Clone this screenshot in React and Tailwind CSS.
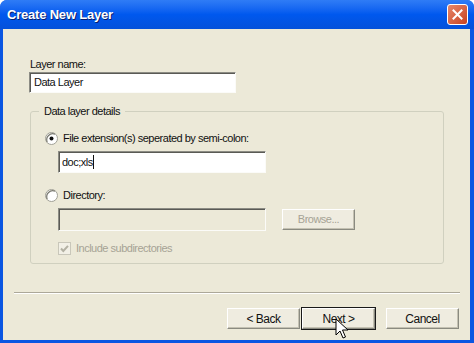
import React from "react";

const FONT = { fontFamily: '"Liberation Sans", Arial, sans-serif' };

const Radio = ({ checked }) => (
	<svg width="13" height="13" viewBox="0 0 13 13" className="shrink-0">
		<circle cx="6.5" cy="6.5" r="6" fill="#ffffff" stroke="#a0a096" strokeWidth="1" />
		<path d="M2.2 10 A6 6 0 0 1 10 2.2" fill="none" stroke="#7a7a70" strokeWidth="1.2" />
		{checked && <circle cx="6.5" cy="6.5" r="2" fill="#111" />}
	</svg>
);

const Sunken = ({ className, children, disabled }) => (
	<div
		className={
			"border border-t-[#8c8c84] border-l-[#8c8c84] border-b-[#fbfbf8] border-r-[#fbfbf8] shadow-[inset_1px_1px_0_#5a5a55] " +
			(disabled ? "bg-[#ece9d8] " : "bg-white ") +
			className
		}
	>
		{children}
	</div>
);

const Button = ({ label, isDefault, disabled }) => (
	<div
		className={
			"w-[75px] h-[23px] flex items-center justify-center " +
			(isDefault ? "border border-[#1a1a1a] " : "border border-transparent ")
		}
	>
		<div
			className={
				"w-full h-full flex items-center justify-center bg-[#efece0] border border-t-white border-l-white border-b-[#8a8a80] border-r-[#8a8a80] shadow-[inset_-1px_-1px_0_#c4c1b2] " +
				(disabled ? "text-[#a6a395]" : "text-[#111]")
			}
		>
			{label}
		</div>
	</div>
);

export default function App() {
	return (
		<div style={FONT} className="w-[474px] h-[343px] bg-[#0a56e2] rounded-t-[7px] flex flex-col overflow-hidden">
			{/* title bar */}
			<div className="h-[29px] shrink-0 flex items-center justify-between pl-[7px] pr-[6px] bg-gradient-to-b from-[#2f7cf6] via-[#0058ee] to-[#0451da]">
				<span className="text-white font-bold text-[13px] tracking-[-0.2px] [text-shadow:1px_1px_0_#0a1f6b]">Create New Layer</span>
				<div className="w-[21px] h-[21px] rounded-[3px] border border-white bg-gradient-to-br from-[#e6876a] to-[#c8401c] flex items-center justify-center">
					<svg width="11" height="11" viewBox="0 0 11 11">
						<path d="M1.5 1.5 L9.5 9.5 M9.5 1.5 L1.5 9.5" stroke="#fff" strokeWidth="2" strokeLinecap="square" />
					</svg>
				</div>
			</div>

			{/* body */}
			<div className="flex-1 mr-[4px] mb-[3px] ml-[3px] bg-[#ece9d8] flex flex-col text-[11px] tracking-[-0.5px] text-[#111] relative">
				<div className="pl-[27px] pt-[28px] leading-[14px]">Layer name:</div>
				<Sunken className="ml-[26px] mt-[1px] w-[207px] h-[21px] flex items-center pl-[4px]">Data Layer</Sunken>

				<fieldset className="ml-[27px] mt-[11px] w-[414px] h-[160px] border border-[#d0d0bf] rounded-[3px] px-[14px]">
					<legend className="px-[5px] ml-[-6px] leading-[14px]">Data layer details</legend>
					<div className="flex items-center gap-[5px] mt-[14px] h-[13px]">
						<Radio checked />
						<span>File extension(s) seperated by semi-colon:</span>
					</div>
					<Sunken className="ml-[13px] mt-[6px] w-[208px] h-[22px] flex items-center pl-[3px]">
						<span>doc;xls</span>
						<span className="w-px h-[14px] bg-[#111]" />
					</Sunken>
					<div className="flex items-center gap-[5px] mt-[16px] h-[13px]">
						<Radio />
						<span>Directory:</span>
					</div>
					<div className="flex items-center mt-[6px] ml-[13px] gap-[15px]">
						<Sunken disabled className="w-[208px] h-[23px]" />
						<Button label="Browse..." disabled />
					</div>
					<div className="flex items-center gap-[5px] ml-[13px] mt-[11px] h-[13px] text-[#a6a395]">
						<svg width="13" height="13" viewBox="0 0 13 13" className="shrink-0">
							<rect x="0.5" y="0.5" width="12" height="12" fill="#f2f0e6" stroke="#c9c7ba" />
							<path d="M3 6.5 L5.3 9 L10 3.8" fill="none" stroke="#b3b1a3" strokeWidth="2" />
						</svg>
						<span>Include subdirectories</span>
					</div>
				</fieldset>

				<div className="ml-[11px] mt-[28px] w-[446px] h-[2px] border-t border-t-[#aca899] border-b border-b-white" />

				<div className="flex mt-[13px] pl-[223px] text-[12px] tracking-[-0.5px]">
					<Button label="< Back" />
					<Button label="Next >" isDefault />
					<div className="w-[9px]" />
					<Button label="Cancel" />
				</div>

				{/* mouse cursor over the Next button */}
				<svg width="14" height="22" viewBox="0 0 14 22" className="absolute left-[332px] top-[289px]">
					<path d="M1 1 L1 17 L5 13 L8 20 L10.5 19 L7.5 12 L13 12 Z" fill="#fff" stroke="#000" strokeWidth="1" strokeLinejoin="miter" />
				</svg>
			</div>
		</div>
	);
}
